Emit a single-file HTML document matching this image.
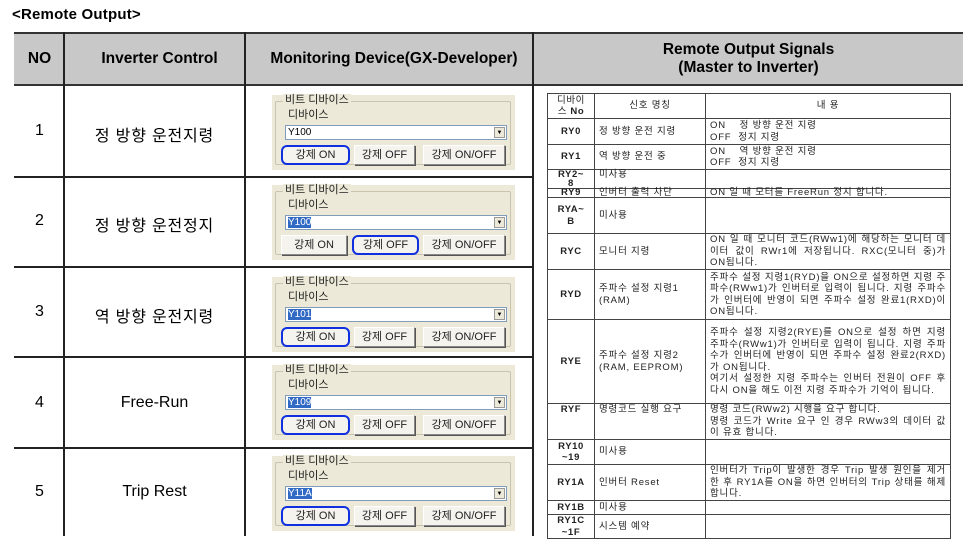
<!DOCTYPE html>
<html><head><meta charset="utf-8"><style>
*{margin:0;padding:0;box-sizing:border-box}
body{width:970px;height:547px;background:#fff;position:relative;overflow:hidden;font-family:"Liberation Sans","Noto Sans CJK KR",sans-serif;color:#000}
.a{position:absolute}
.t{font-weight:bold;font-size:15px;left:12px;top:6px;letter-spacing:0.2px}
.hd{background:#c8c8c8;top:32px;height:54px;border-top:2px solid #333;border-bottom:2px solid #333}
.vl{width:2px;background:#222}
.hl{height:2px;background:#222;left:14px;width:520px}
.ht{font-weight:bold;font-size:15.5px;text-align:center}
.ct{font-size:16px;text-align:center}
.k{letter-spacing:0.8px}
.pn{background:#ece9d8;width:243px;height:75px;left:272px}
.gb{position:absolute;left:3px;top:6px;width:236px;height:64px;border:1px solid #c8c4b0;border-radius:2px}
.gl{position:absolute;left:7px;top:-8px;font-size:11px;line-height:13px;background:#ece9d8;padding:0 2px;color:#222}
.dl{position:absolute;left:16px;top:14px;font-size:11px;line-height:13px;color:#222}
.cb{position:absolute;left:13px;top:30px;width:222px;height:15px;background:#fff;border:1px solid #7f9db9;font-size:10px;line-height:13px;padding-left:2px}
.cb span.s{background:#316ac5;color:#fff}
.dd{position:absolute;right:1px;top:1px;width:11px;height:11px;background:#ece9d8;border:1px solid #999;font-size:6px;text-align:center;line-height:10px}
.bt{position:absolute;top:50px;height:20px;background:#f4f3ee;border:1px solid #888;border-top-color:#fff;border-left-color:#fff;box-shadow:1px 1px 0 #555;font-size:11px;text-align:center;line-height:18px;color:#222}
.bt.f{border:2px solid #1030e0;border-radius:6px;box-shadow:none;line-height:16px}
table.n{position:absolute;left:547px;top:93px;width:404px;border-collapse:collapse;font-size:9.5px;line-height:11.5px;color:#222;letter-spacing:0.8px}
table.n td{border:1px solid #444;padding:0 4px;vertical-align:middle}
table.n td:first-child{text-align:center;font-weight:bold;width:47px;padding:0 2px;letter-spacing:0.6px}
table.n td:nth-child(2){width:111px}
table.n td:nth-child(3){text-align:justify}
</style></head><body>
<div class="a t">&lt;Remote Output&gt;</div>
<div class="a hd" style="left:14px;width:949px"></div>
<div class="a ht" style="left:14px;width:51px;top:50px">NO</div>
<div class="a ht" style="left:65px;width:189px;top:50px">Inverter Control</div>
<div class="a ht" style="left:254px;width:280px;top:50px">Monitoring Device(GX-Developer)</div>
<div class="a ht" style="left:534px;width:429px;top:41px;line-height:18px">Remote Output Signals<br>(Master to Inverter)</div>
<div class="a vl" style="left:63px;top:32px;height:504px"></div>
<div class="a vl" style="left:244px;top:32px;height:504px"></div>
<div class="a vl" style="left:532px;top:32px;height:504px"></div>
<div class="a hl" style="top:176px"></div>
<div class="a hl" style="top:266px"></div>
<div class="a hl" style="top:356px"></div>
<div class="a hl" style="top:447px"></div>

<div class="a ct" style="left:14px;width:51px;top:122px">1</div>
<div class="a ct k" style="left:65px;width:179px;top:122px">정 방향 운전지령</div>
<div class="a ct" style="left:14px;width:51px;top:212px">2</div>
<div class="a ct k" style="left:65px;width:179px;top:212px">정 방향 운전정지</div>
<div class="a ct" style="left:14px;width:51px;top:303px">3</div>
<div class="a ct k" style="left:65px;width:179px;top:303px">역 방향 운전지령</div>
<div class="a ct" style="left:14px;width:51px;top:394px">4</div>
<div class="a ct" style="left:65px;width:179px;top:394px">Free-Run</div>
<div class="a ct" style="left:14px;width:51px;top:483px">5</div>
<div class="a ct" style="left:65px;width:179px;top:483px">Trip Rest</div>

<div class="a pn" style="top:95px"><div class="gb"><span class="gl">비트 디바이스</span></div><div class="dl">디바이스</div><div class="cb">Y100<div class="dd">▼</div></div>
<div class="bt f" style="left:9px;width:69px">강제 ON</div><div class="bt" style="left:82px;width:61px">강제 OFF</div><div class="bt" style="left:151px;width:82px">강제 ON/OFF</div></div>

<div class="a pn" style="top:185px"><div class="gb"><span class="gl">비트 디바이스</span></div><div class="dl">디바이스</div><div class="cb"><span class="s">Y100</span><div class="dd">▼</div></div>
<div class="bt" style="left:9px;width:66px">강제 ON</div><div class="bt f" style="left:80px;width:67px">강제 OFF</div><div class="bt" style="left:151px;width:82px">강제 ON/OFF</div></div>

<div class="a pn" style="top:277px"><div class="gb"><span class="gl">비트 디바이스</span></div><div class="dl">디바이스</div><div class="cb"><span class="s">Y101</span><div class="dd">▼</div></div>
<div class="bt f" style="left:9px;width:69px">강제 ON</div><div class="bt" style="left:82px;width:61px">강제 OFF</div><div class="bt" style="left:151px;width:82px">강제 ON/OFF</div></div>

<div class="a pn" style="top:365px"><div class="gb"><span class="gl">비트 디바이스</span></div><div class="dl">디바이스</div><div class="cb"><span class="s">Y109</span><div class="dd">▼</div></div>
<div class="bt f" style="left:9px;width:69px">강제 ON</div><div class="bt" style="left:82px;width:61px">강제 OFF</div><div class="bt" style="left:151px;width:82px">강제 ON/OFF</div></div>

<div class="a pn" style="top:456px"><div class="gb"><span class="gl">비트 디바이스</span></div><div class="dl">디바이스</div><div class="cb"><span class="s">Y11A</span><div class="dd">▼</div></div>
<div class="bt f" style="left:9px;width:69px">강제 ON</div><div class="bt" style="left:82px;width:61px">강제 OFF</div><div class="bt" style="left:151px;width:82px">강제 ON/OFF</div></div>

<table class="n">
<tr style="height:25px"><td style="font-weight:normal">디바이<br>스 <b>No</b></td><td style="text-align:center">신호 명칭</td><td style="text-align:center">내 용</td></tr>
<tr style="height:26px"><td>RY0</td><td>정 방향 운전 지령</td><td>ON &nbsp;&nbsp; 정 방향 운전 지령<br>OFF &nbsp;정지 지령</td></tr>
<tr style="height:25px"><td>RY1</td><td>역 방향 운전 중</td><td>ON &nbsp;&nbsp; 역 방향 운전 지령<br>OFF &nbsp;정지 지령</td></tr>
<tr style="height:17px"><td style="line-height:9px">RY2~<br>8</td><td style="vertical-align:top;line-height:10px">미사용</td><td></td></tr>
<tr style="height:9px"><td style="line-height:8px">RY9</td><td style="line-height:8px">인버터 출력 차단</td><td style="line-height:8px">ON 일 때 모터를 FreeRun 정지 합니다.</td></tr>
<tr style="height:36px"><td>RYA~<br>B</td><td>미사용</td><td></td></tr>
<tr style="height:36px"><td>RYC</td><td>모니터 지령</td><td>ON 일 때 모니터 코드(RWw1)에 해당하는 모니터 데이터 값이 RWr1에 저장됩니다. RXC(모니터 중)가 ON됩니다.</td></tr>
<tr style="height:50px"><td>RYD</td><td>주파수 설정 지령1<br>(RAM)</td><td>주파수 설정 지령1(RYD)을 ON으로 설정하면 지령 주파수(RWw1)가 인버터로 입력이 됩니다. 지령 주파수가 인버터에 반영이 되면 주파수 설정 완료1(RXD)이 ON됩니다.</td></tr>
<tr style="height:84px"><td>RYE</td><td>주파수 설정 지령2<br>(RAM, EEPROM)</td><td>주파수 설정 지령2(RYE)를 ON으로 설정 하면 지령 주파수(RWw1)가 인버터로 입력이 됩니다. 지령 주파수가 인버터에 반영이 되면 주파수 설정 완료2(RXD)가 ON됩니다.<br>여기서 설정한 지령 주파수는 인버터 전원이 OFF 후 다시 ON을 해도 이전 지령 주파수가 기억이 됩니다.</td></tr>
<tr style="height:36px"><td style="vertical-align:top">RYF</td><td style="vertical-align:top">명령코드 실행 요구</td><td>명령 코드(RWw2) 시행을 요구 합니다.<br>명령 코드가 Write 요구 인 경우 RWw3의 데이터 값이 유효 합니다.</td></tr>
<tr style="height:25px"><td>RY10<br>~19</td><td>미사용</td><td></td></tr>
<tr style="height:36px"><td>RY1A</td><td>인버터 Reset</td><td>인버터가 Trip이 발생한 경우 Trip 발생 원인을 제거 한 후 RY1A를 ON을 하면 인버터의 Trip 상태를 해제합니다.</td></tr>
<tr style="height:14px"><td style="line-height:11px">RY1B</td><td style="line-height:11px">미사용</td><td></td></tr>
<tr style="height:24px"><td>RY1C<br>~1F</td><td>시스템 예약</td><td></td></tr>
</table>
</body></html>
